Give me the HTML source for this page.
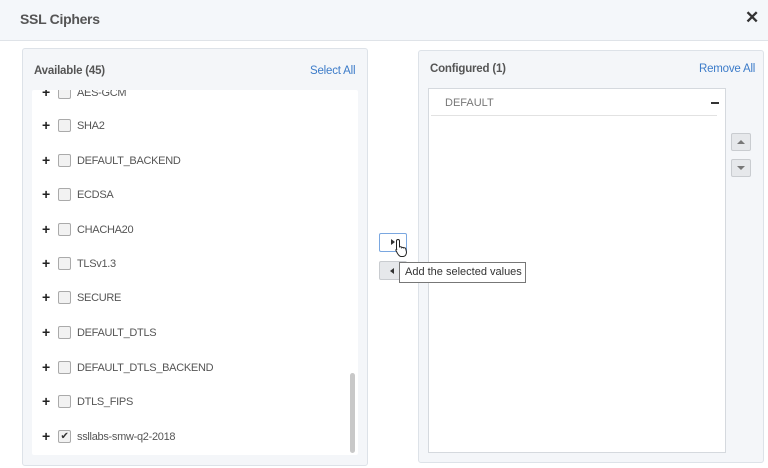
<!DOCTYPE html>
<html><head><style>
*{margin:0;padding:0;box-sizing:border-box}
body{width:768px;height:468px;background:#fff;font-family:"Liberation Sans",sans-serif;position:relative;overflow:hidden;color:#444}
.hdr{position:absolute;left:0;top:0;width:768px;height:41px;background:#f4f7fa;border-bottom:1px solid #dfe3e8}
.hdr .t{position:absolute;left:20px;top:11px;font-size:14px;font-weight:bold;color:#555;letter-spacing:-0.3px}
.hdr .x{position:absolute;left:745px;top:8px;font-size:17px;font-weight:bold;color:#333}
.panel{position:absolute;background:#f4f6f9;border:1px solid #dde2e8;border-radius:3px}
.ph{position:absolute;font-size:11.5px;font-weight:bold;color:#555;letter-spacing:-0.2px}
.lnk{position:absolute;font-size:11.5px;color:#3d7cc9;letter-spacing:-0.2px}
.list{position:absolute;left:32px;top:90px;width:326px;height:365px;background:#fff;overflow:hidden;border-radius:2px}
.row{position:absolute;left:0;height:16px;font-size:11px;color:#555;letter-spacing:-0.3px}
.row .p{position:absolute;left:10px;top:-2px;font-weight:bold;font-size:14px;color:#222}
.row .c{position:absolute;left:26px;top:0px;width:13px;height:13px;border:1px solid #aaa;border-radius:2px;background:#f2f2f2}
.row .l{position:absolute;left:45px;top:1px;white-space:nowrap}
.sb{position:absolute;left:350px;top:373px;width:5px;height:80px;background:#c8c8c8;border-radius:3px}
.box{position:absolute;left:428px;top:88px;width:298px;height:365px;background:#fff;border:1px solid #d5d9de}
.btn{position:absolute;background:#e6e8eb;border:1px solid #c9ccd0;border-radius:2px}
</style></head><body>
<div class="hdr"><div class="t">SSL Ciphers</div><div class="x">✕</div></div>
<div class="panel" style="left:22px;top:48px;width:346px;height:418px"></div>
<div class="ph" style="left:34px;top:65px">Available (45)</div>
<div class="lnk" style="left:310px;top:65px">Select All</div>
<div class="list">
<div class="row" style="top:-4px"><span class="p">+</span><span class="c"></span><span class="l">AES-GCM</span></div>
<div class="row" style="top:29px"><span class="p">+</span><span class="c"></span><span class="l">SHA2</span></div>
<div class="row" style="top:64px"><span class="p">+</span><span class="c"></span><span class="l">DEFAULT_BACKEND</span></div>
<div class="row" style="top:98px"><span class="p">+</span><span class="c"></span><span class="l">ECDSA</span></div>
<div class="row" style="top:133px"><span class="p">+</span><span class="c"></span><span class="l">CHACHA20</span></div>
<div class="row" style="top:167px"><span class="p">+</span><span class="c"></span><span class="l">TLSv1.3</span></div>
<div class="row" style="top:201px"><span class="p">+</span><span class="c"></span><span class="l">SECURE</span></div>
<div class="row" style="top:236px"><span class="p">+</span><span class="c"></span><span class="l">DEFAULT_DTLS</span></div>
<div class="row" style="top:271px"><span class="p">+</span><span class="c"></span><span class="l">DEFAULT_DTLS_BACKEND</span></div>
<div class="row" style="top:305px"><span class="p">+</span><span class="c"></span><span class="l">DTLS_FIPS</span></div>
<div class="row" style="top:340px"><span class="p">+</span><span class="c" style="font-size:10px;line-height:11px;text-align:center;color:#333">✔</span><span class="l">ssllabs-smw-q2-2018</span></div>
</div>
<div class="sb"></div>
<div class="panel" style="left:418px;top:50px;width:346px;height:413px"></div>
<div class="ph" style="left:430px;top:63px">Configured (1)</div>
<div class="lnk" style="left:699px;top:63px">Remove All</div>
<div class="box"><div style="position:absolute;left:16px;top:8px;font-size:11px;color:#777">DEFAULT</div>
<div style="position:absolute;left:282px;top:13px;width:8px;height:2px;background:#333"></div>
<div style="position:absolute;left:2px;right:8px;top:26px;height:1px;background:#e2e2e2"></div></div>
<div class="btn" style="left:731px;top:133px;width:20px;height:18px"><div style="margin:6px auto;width:0;height:0;border-left:4px solid transparent;border-right:4px solid transparent;border-bottom:4px solid #777"></div></div>
<div class="btn" style="left:731px;top:159px;width:20px;height:18px"><div style="margin:6px auto;width:0;height:0;border-left:4px solid transparent;border-right:4px solid transparent;border-top:4px solid #777"></div></div>
<div class="btn" style="left:379px;top:233px;width:28px;height:19px;background:#fff;border:1px solid #7aa7e0"><div style="position:absolute;left:11px;top:5px;border-top:3px solid transparent;border-bottom:3px solid transparent;border-left:4px solid #333"></div></div>
<div class="btn" style="left:379px;top:261px;width:28px;height:19px"><div style="position:absolute;left:10px;top:6px;border-top:3px solid transparent;border-bottom:3px solid transparent;border-right:4px solid #333"></div></div>
<svg style="position:absolute;left:394px;top:238px" width="16" height="20" viewBox="0 0 16 20"><path d="M4 1.5c1 0 1.5.6 1.5 1.5v6l1-.3c.8 0 1.2.4 1.3 1 .4-.5 1.6-.5 2 .3.5-.4 1.700-.3 1.9.6l.8 3.4c0 2-1 4.5-3.5 4.5H7c-1.5 0-2.5-1.5-3.5-3L2 12.5c-.5-.8.5-1.5 1.2-1L2.500 11V3c0-1 .6-1.5 1.5-1.5z" fill="#fff" stroke="#222" stroke-width="1"/></svg>
<div style="position:absolute;left:399px;top:262px;width:127px;height:21px;background:#fff;border:1px solid #777;font-size:11px;color:#333;padding:3px 0 0 5px;white-space:nowrap">Add the selected values</div>
</body></html>
